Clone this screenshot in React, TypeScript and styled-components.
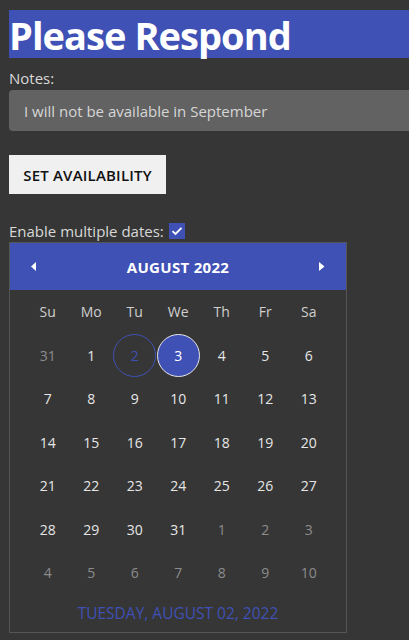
import styled, { createGlobalStyle, css } from "styled-components";
import { useState } from "react";

const GlobalStyle = createGlobalStyle`
  html, body {
    margin: 0;
    padding: 0;
    background: #363636;
  }
  body {
    font-family: "Open Sans", "Noto Sans", sans-serif;
    color: #dcdcdc;
  }
`;

const WEEKDAYS = ["Su", "Mo", "Tu", "We", "Th", "Fr", "Sa"];

interface Day {
  num: number;
  outside: boolean;
}

// Agosto 2022 começa numa segunda-feira
const buildDays = (): Day[] => {
  const days: Day[] = [{ num: 31, outside: true }];
  for (let i = 1; i <= 31; i++) days.push({ num: i, outside: false });
  let next = 1;
  while (days.length < 42) days.push({ num: next++, outside: true });
  return days;
};

export default function App() {
  const [multiple, setMultiple] = useState(true);
  const days = buildDays();

  return (
    <Page>
      <GlobalStyle />
      <Title>Please Respond</Title>
      <Label>Notes:</Label>
      <NotesInput defaultValue="I will not be available in September" />
      <SetButton>SET AVAILABILITY</SetButton>

      <CheckRow>
        Enable multiple dates:
        <CheckBox $checked={multiple} onClick={() => setMultiple(!multiple)}>
          {multiple && (
            <svg width="12" height="10" viewBox="0 0 12 10">
              <path d="M1.5 5.2 L4.5 8 L10.5 1.8" fill="none" stroke="#fff" strokeWidth="1.8" />
            </svg>
          )}
        </CheckBox>
      </CheckRow>

      <Calendar>
        <CalHeader>
          <Arrow>
            <svg width="6" height="9" viewBox="0 0 6 9">
              <path d="M5 0 L5 9 L0 4.5 Z" fill="#fff" />
            </svg>
          </Arrow>
          <MonthTitle>AUGUST 2022</MonthTitle>
          <Arrow>
            <svg width="6" height="9" viewBox="0 0 6 9">
              <path d="M0 0 L0 9 L5.5 4.5 Z" fill="#fff" />
            </svg>
          </Arrow>
        </CalHeader>
        <Grid>
          {WEEKDAYS.map((d) => (
            <WeekDay key={d}>{d}</WeekDay>
          ))}
          {days.map((d, i) => (
            <DayCell key={i}>
              <DayCircle
                $outside={d.outside}
                $today={!d.outside && d.num === 2}
                $selected={!d.outside && d.num === 3}
              >
                {d.num}
              </DayCircle>
            </DayCell>
          ))}
        </Grid>
        <Footer>TUESDAY, AUGUST 02, 2022</Footer>
      </Calendar>
    </Page>
  );
}

const Page = styled.div`
  padding: 10px 0 8px 9px;
  display: flex;
  flex-direction: column;
  align-items: flex-start;
  overflow: hidden;
`;

const Title = styled.h1`
  margin: 0;
  align-self: stretch;
  background: #3f51b5;
  color: #fff;
  font-size: 38px;
  font-weight: 700;
  height: 48px;
  line-height: 50px;
  letter-spacing: -0.95px;
  white-space: nowrap;
`;

const Label = styled.div`
  margin-top: 10px;
  font-size: 15px;
  line-height: 20px;
  color: #d8d8d8;
`;

const NotesInput = styled.input`
  box-sizing: border-box;
  margin-top: 2px;
  width: 420px;
  height: 41px;
  background: #626262;
  border: none;
  border-radius: 4px;
  padding: 0 15px;
  font-family: "Open Sans", "Noto Sans", sans-serif;
  font-size: 15px;
  color: #d6d6d6;
  outline: none;
`;

const SetButton = styled.button`
  margin-top: 24px;
  width: 157px;
  height: 39px;
  background: #f0f0f0;
  border: none;
  border-radius: 0;
  font-family: "Open Sans", "Noto Sans", sans-serif;
  font-size: 15px;
  font-weight: 600;
  color: #111;
  letter-spacing: 0.2px;
  padding: 0;
  cursor: pointer;
`;

const CheckRow = styled.div`
  margin-top: 28px;
  display: flex;
  align-items: center;
  gap: 5px;
  font-size: 15px;
  line-height: 18px;
  color: #d8d8d8;
`;

const CheckBox = styled.span<{ $checked: boolean }>`
  width: 16px;
  height: 16px;
  display: inline-flex;
  align-items: center;
  justify-content: center;
  background: ${(p) => (p.$checked ? "#3f51b5" : "transparent")};
  border: ${(p) => (p.$checked ? "none" : "1px solid #aaa")};
  cursor: pointer;
`;

const Calendar = styled.div`
  margin-top: 2px;
  width: 338px;
  box-sizing: border-box;
  border: 1px solid #555;
  background: #363636;
`;

const CalHeader = styled.div`
  height: 47px;
  background: #3f51b5;
  display: flex;
  align-items: center;
  justify-content: space-between;
  padding: 0 20px;
`;

const Arrow = styled.span`
  display: flex;
  align-items: center;
  justify-content: center;
  width: 8px;
  cursor: pointer;
`;

const MonthTitle = styled.div`
  color: #fff;
  font-size: 15px;
  font-weight: 700;
  letter-spacing: 0.3px;
`;

const Grid = styled.div`
  display: grid;
  grid-template-columns: repeat(7, 43.5px);
  grid-auto-rows: 43.5px;
  padding: 0 16px;
`;

const WeekDay = styled.div`
  display: flex;
  align-items: center;
  justify-content: center;
  font-size: 14px;
  color: #cfcfcf;
`;

const DayCell = styled.div`
  display: flex;
  align-items: center;
  justify-content: center;
`;

const DayCircle = styled.div<{ $outside: boolean; $today: boolean; $selected: boolean }>`
  box-sizing: border-box;
  width: 43px;
  height: 43px;
  border-radius: 50%;
  display: flex;
  align-items: center;
  justify-content: center;
  font-size: 14px;
  color: ${(p) => (p.$outside ? "#8c8c8c" : "#e6e6e6")};
  cursor: pointer;
  ${(p) =>
    p.$today &&
    css`
      border: 1px solid #3f51b5;
      color: #3f51b5;
    `}
  ${(p) =>
    p.$selected &&
    css`
      background: #3f51b5;
      border: 1.5px solid #e8e8e8;
      color: #fff;
    `}
`;

const Footer = styled.div`
  height: 37px;
  display: flex;
  align-items: center;
  justify-content: center;
  font-size: 15.5px;
  color: #3f51b5;
`;
